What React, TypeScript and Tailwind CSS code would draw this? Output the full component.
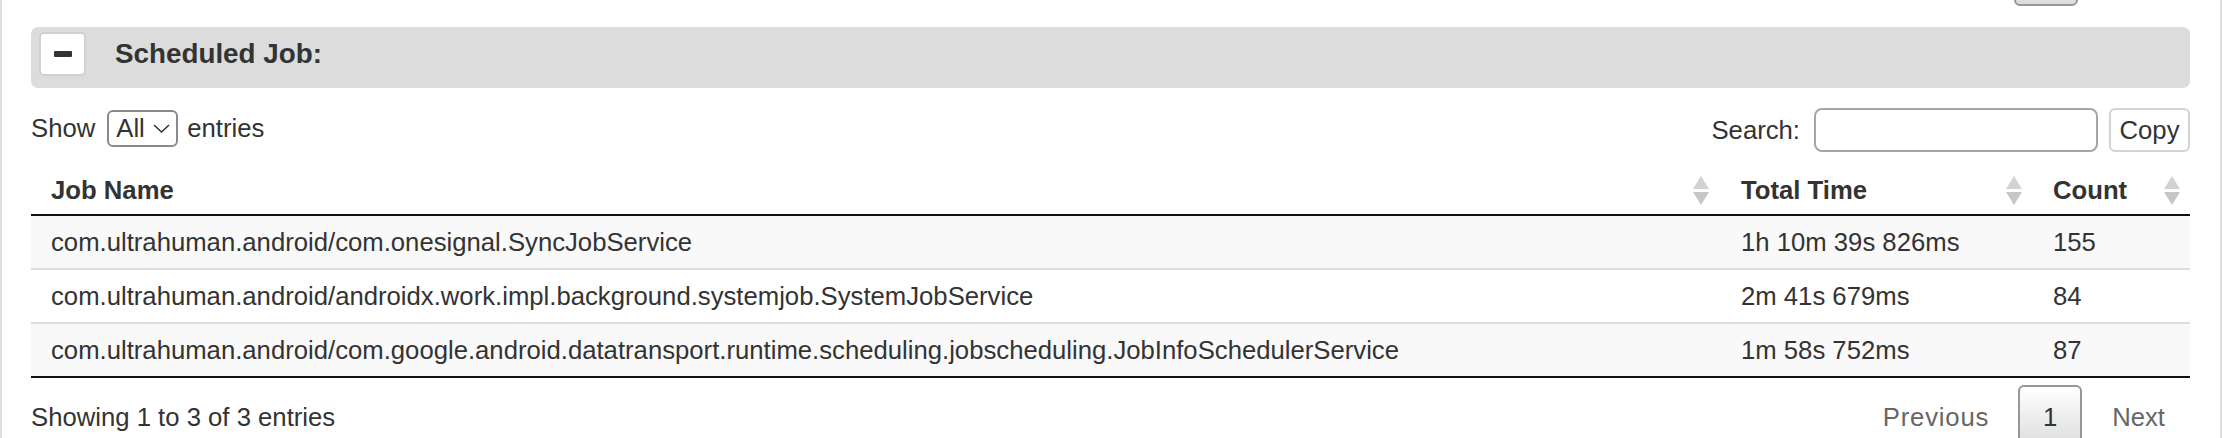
import React from "react";

const rows = [
  {
    name: "com.ultrahuman.android/com.onesignal.SyncJobService",
    time: "1h 10m 39s 826ms",
    count: "155",
  },
  {
    name: "com.ultrahuman.android/androidx.work.impl.background.systemjob.SystemJobService",
    time: "2m 41s 679ms",
    count: "84",
  },
  {
    name: "com.ultrahuman.android/com.google.android.datatransport.runtime.scheduling.jobscheduling.JobInfoSchedulerService",
    time: "1m 58s 752ms",
    count: "87",
  },
];

function SortIcon() {
  return (
    <svg width="16" height="29" viewBox="0 0 16 29" className="shrink-0">
      <polygon points="8,0 16,13 0,13" fill="#d2d2d2" />
      <polygon points="0,16 16,16 8,29" fill="#c6c6c6" />
    </svg>
  );
}

export default function App() {
  return (
    <div className="w-[2240px] h-[438px] overflow-hidden bg-white text-[#333] font-['Liberation_Sans',Arial,sans-serif]">
      <div className="w-[2222px] h-full border-x-2 border-[#dedede] pl-[29px] pr-[30px]">
        {/* bottom edge of the pager above */}
        <div className="h-[6px] overflow-hidden flex justify-end items-end pr-[112px]">
          <div className="w-[64px] h-[60px] shrink-0 rounded-[6px] border-2 border-[#979797] bg-linear-to-b from-white to-[#dcdcdc]" />
        </div>

        {/* section header */}
        <div className="mt-[21px] h-[61px] rounded-[7px] bg-[#dcdcdc] flex items-start pt-[5px] pl-[8px]">
          <button className="w-[47px] h-[44px] rounded-[5px] border-2 border-[#d0d0d0] bg-white flex items-center justify-center">
            <span className="block w-[18px] h-[6px] rounded-[1px] bg-[#333]" />
          </button>
          <span className="ml-[29px] text-[27.8px] font-bold leading-[44px] text-[#333]">
            Scheduled Job:
          </span>
        </div>

        {/* length + search */}
        <div className="mt-[20px] h-[44px] flex items-center justify-between text-[25.7px]">
          <div className="flex items-center pb-[3px]">
            <span>Show</span>
            <div className="ml-[12px] w-[71px] h-[37px] rounded-[6px] border-2 border-[#8a8a8a] flex items-center pl-[7px]">
              <span className="leading-none">All</span>
              <svg width="17" height="9" viewBox="0 0 17 9" className="ml-[8px]">
                <polyline points="1,1 8.5,8 16,1" fill="none" stroke="#333" strokeWidth="1.5" />
              </svg>
            </div>
            <span className="ml-[9px]">entries</span>
          </div>
          <div className="flex items-center">
            <span>Search:</span>
            <input className="ml-[14px] w-[284px] h-[44px] rounded-[8px] border-2 border-[#a6a6a6] bg-white outline-none" />
            <button className="ml-[11px] w-[81px] h-[44px] rounded-[6px] border-2 border-[#d3d3d3] bg-white text-[25.7px] text-[#333]">
              Copy
            </button>
          </div>
        </div>

        {/* table */}
        <div className="mt-[14px] text-[25.7px]">
          <div className="grid grid-cols-[1690px_312px_157px] h-[50px] border-b-2 border-[#111] font-bold">
            <div className="flex items-center justify-between pl-[20px] pr-[12px]">
              <span>Job Name</span>
              <SortIcon />
            </div>
            <div className="flex items-center justify-between pl-[20px] pr-[11px]">
              <span>Total Time</span>
              <SortIcon />
            </div>
            <div className="flex items-center justify-between pl-[20px] pr-[10px]">
              <span>Count</span>
              <SortIcon />
            </div>
          </div>
          {rows.map((r, i) => (
            <div
              key={r.name}
              className={`grid grid-cols-[1690px_312px_157px] h-[54px] items-center border-b-2 ${
                i === rows.length - 1 ? "border-[#111]" : "border-[#dddddd]"
              } ${i % 2 === 0 ? "bg-[#f9f9f9]" : "bg-white"}`}
            >
              <div className="pl-[20px] whitespace-nowrap">{r.name}</div>
              <div className="pl-[20px] whitespace-nowrap">{r.time}</div>
              <div className="pl-[20px]">{r.count}</div>
            </div>
          ))}
        </div>

        {/* info + pager */}
        <div className="flex justify-between items-start text-[25.7px]">
          <div className="mt-[24px] leading-[30px]">Showing 1 to 3 of 3 entries</div>
          <div className="mt-[7px] flex items-center pr-[25px] h-[64px]">
            <span className="text-[#666] tracking-[0.8px]">Previous</span>
            <div className="ml-[29px] w-[64px] h-[64px] rounded-[6px] border-2 border-[#979797] bg-linear-to-b from-white to-[#dcdcdc] flex items-center justify-center">
              1
            </div>
            <span className="ml-[30px] text-[#666]">Next</span>
          </div>
        </div>
      </div>
    </div>
  );
}
